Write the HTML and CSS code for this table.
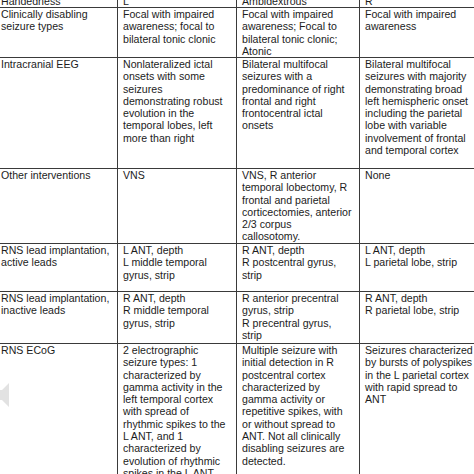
FILE: index.html
```html
<!DOCTYPE html>
<html>
<head>
<meta charset="utf-8">
<link rel="stylesheet" href="styles.css">
</head>
<body>
<div class="sheet">
  <div class="grid">
    <div class="cell r-head">Handedness</div>
    <div class="cell r-head">L</div>
    <div class="cell r-head">Ambidextrous</div>
    <div class="cell r-head">R</div>

    <div class="cell r1">Clinically disabling<br>seizure types</div>
    <div class="cell r1">Focal with impaired<br>awareness; focal to<br>bilateral tonic clonic</div>
    <div class="cell r1">Focal with impaired<br>awareness; Focal to<br>bilateral tonic clonic;<br>Atonic</div>
    <div class="cell r1">Focal with impaired<br>awareness</div>

    <div class="cell r2">Intracranial EEG</div>
    <div class="cell r2">Nonlateralized ictal<br>onsets with some<br>seizures<br>demonstrating robust<br>evolution in the<br>temporal lobes, left<br>more than right</div>
    <div class="cell r2">Bilateral multifocal<br>seizures with a<br>predominance of right<br>frontal and right<br>frontocentral ictal<br>onsets</div>
    <div class="cell r2">Bilateral multifocal<br>seizures with majority<br>demonstrating broad<br>left hemispheric onset<br>including the parietal<br>lobe with variable<br>involvement of frontal<br>and temporal cortex</div>

    <div class="cell r3">Other interventions</div>
    <div class="cell r3">VNS</div>
    <div class="cell r3">VNS, R anterior<br>temporal lobectomy, R<br>frontal and parietal<br>corticectomies, anterior<br>2/3 corpus<br>callosotomy.</div>
    <div class="cell r3">None</div>

    <div class="cell r4">RNS lead implantation,<br>active leads</div>
    <div class="cell r4">L ANT, depth<br>L middle temporal<br>gyrus, strip</div>
    <div class="cell r4">R ANT, depth<br>R postcentral gyrus,<br>strip</div>
    <div class="cell r4">L ANT, depth<br>L parietal lobe, strip</div>

    <div class="cell r5">RNS lead implantation,<br>inactive leads</div>
    <div class="cell r5">R ANT, depth<br>R middle temporal<br>gyrus, strip</div>
    <div class="cell r5">R anterior precentral<br>gyrus, strip<br>R precentral gyrus,<br>strip</div>
    <div class="cell r5">R ANT, depth<br>R parietal lobe, strip</div>

    <div class="cell r6">RNS ECoG</div>
    <div class="cell r6">2 electrographic<br>seizure types: 1<br>characterized by<br>gamma activity in the<br>left temporal cortex<br>with spread of<br>rhythmic spikes to the<br>L ANT, and 1<br>characterized by<br>evolution of rhythmic<br>spikes in the L ANT</div>
    <div class="cell r6">Multiple seizure with<br>initial detection in R<br>postcentral cortex<br>characterized by<br>gamma activity or<br>repetitive spikes, with<br>or without spread to<br>ANT. Not all clinically<br>disabling seizures are<br>detected.</div>
    <div class="cell r6">Seizures characterized<br>by bursts of polyspikes<br>in the L parietal cortex<br>with rapid spread to<br>ANT</div>
  </div>
  <svg class="ghost" width="12" height="26" viewBox="0 0 12 26">
    <path d="M0 8 H4 L11 1 V25 L4 18 H0 Z" fill="#e2e2e2"/>
  </svg>
</div>
</body>
</html>
```
FILE: styles.css
```css
html, body {
  margin: 0;
  padding: 0;
  background: #ffffff;
}
.sheet {
  width: 474px;
  height: 474px;
  overflow: hidden;
  position: relative;
}
.grid {
  display: grid;
  grid-template-columns: 122px 119px 123px 124px;
  grid-template-rows: 13px 50px 111px 75px 48px 52px 160px;
  margin-top: -6px;
  margin-left: -5px;
  font-family: "Liberation Sans", Arial, sans-serif;
  font-size: 10.6px;
  line-height: 12.3px;
  color: #1c1c1c;
}
.cell {
  box-sizing: border-box;
  border-left: 1px solid #3a3a3a;
  border-top: 1px solid #3a3a3a;
  padding: 0 4px 0 5px;
  white-space: nowrap;
}
.ghost {
  position: absolute;
  left: -2px;
  top: 382px;
}
```
